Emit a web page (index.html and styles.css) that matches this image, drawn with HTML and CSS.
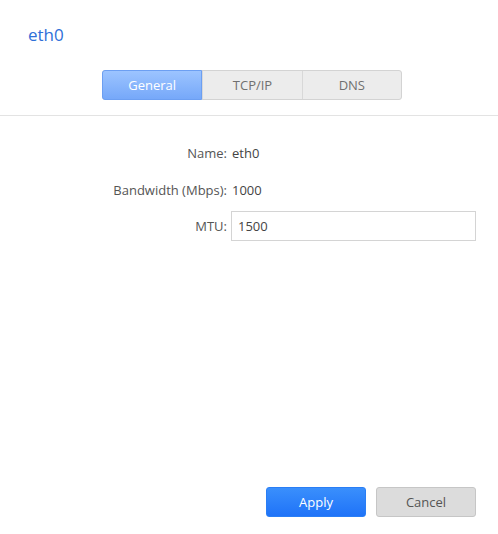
FILE: index.html
```html
<!DOCTYPE html>
<html>
<head>
<meta charset="utf-8">
<link rel="stylesheet" href="styles.css">
</head>
<body>
<div class="dialog">
  <div class="title">eth0</div>
  <div class="tabs-wrap">
    <div class="tabs">
      <div class="tab active">General</div>
      <div class="tab">TCP/IP</div>
      <div class="tab">DNS</div>
    </div>
  </div>
  <div class="divider"></div>
  <div class="form">
    <div class="row row-name">
      <div class="label">Name:</div>
      <div class="value">eth0</div>
    </div>
    <div class="row row-bw">
      <div class="label">Bandwidth (Mbps):</div>
      <div class="value">1000</div>
    </div>
    <div class="row row-input">
      <div class="label">MTU:</div>
      <input class="input" type="text" value="1500">
    </div>
  </div>
  <div class="spacer"></div>
  <div class="buttons">
    <button class="btn btn-primary">Apply</button>
    <button class="btn btn-default">Cancel</button>
  </div>
</div>
</body>
</html>
```
FILE: styles.css
```css
html, body {
  margin: 0;
  padding: 0;
  background: #ffffff;
}
body {
  font-family: "Open Sans", "Noto Sans", "Liberation Sans", sans-serif;
  font-size: 13px;
  color: #444;
}
.dialog {
  width: 498px;
  height: 534px;
  display: flex;
  flex-direction: column;
  box-sizing: border-box;
}
.title {
  color: #2f6fd8;
  font-size: 17px;
  line-height: 20px;
  padding: 25px 0 0 28px;
  height: 45px;
  box-sizing: border-box;
}
.tabs-wrap {
  display: flex;
  padding: 25px 0 0 102px;
}
.tabs {
  display: flex;
  width: 300px;
  height: 30px;
  border: 1px solid #d3d3d3;
  border-radius: 3px;
  box-sizing: border-box;
  background: #ececec;
}
.tab {
  flex: 1;
  display: flex;
  align-items: center;
  justify-content: center;
  color: #707070;
  font-size: 13px;
  border-left: 1px solid #d8d8d8;
}
.tab:first-child { border-left: none; }
.tab.active {
  background: linear-gradient(#9cc4ff, #76a8f9);
  color: #ffffff;
  margin: -1px 0 -1px -1px;
  border: 1px solid #6c9ff2;
  border-radius: 3px 0 0 3px;
}
.divider {
  margin-top: 15px;
  height: 1px;
  background: #e3e3e3;
}
.form {
  padding-top: 27px;
  display: flex;
  flex-direction: column;
}
.row {
  display: flex;
  align-items: center;
  height: 20px;
  line-height: 20px;
}
.row-bw { margin-top: 17px; }
.row-input {
  height: 30px;
  margin-top: 11px;
}
.label {
  width: 227px;
  text-align: right;
  color: #555;
  font-size: 13px;
}
.value {
  padding-left: 5px;
  color: #444;
  font-size: 13px;
}
.input {
  margin-left: 4px;
  width: 245px;
  height: 30px;
  box-sizing: border-box;
  border: 1px solid #d4d4d4;
  padding: 0 6px;
  font-family: inherit;
  font-size: 13px;
  color: #444;
  outline: none;
}
.spacer { flex: 1; }
.buttons {
  display: flex;
  justify-content: flex-end;
  gap: 10px;
  padding: 0 22px 17px 0;
}
.btn {
  width: 100px;
  height: 30px;
  border-radius: 3px;
  font-family: inherit;
  font-size: 13px;
  padding: 0;
}
.btn-primary {
  background: linear-gradient(#3a8ffc, #1f73f8);
  border: 1px solid #2a7ef5;
  color: #ffffff;
}
.btn-default {
  background: #dcdcdc;
  border: 1px solid #c6c6c6;
  color: #555;
}
```
